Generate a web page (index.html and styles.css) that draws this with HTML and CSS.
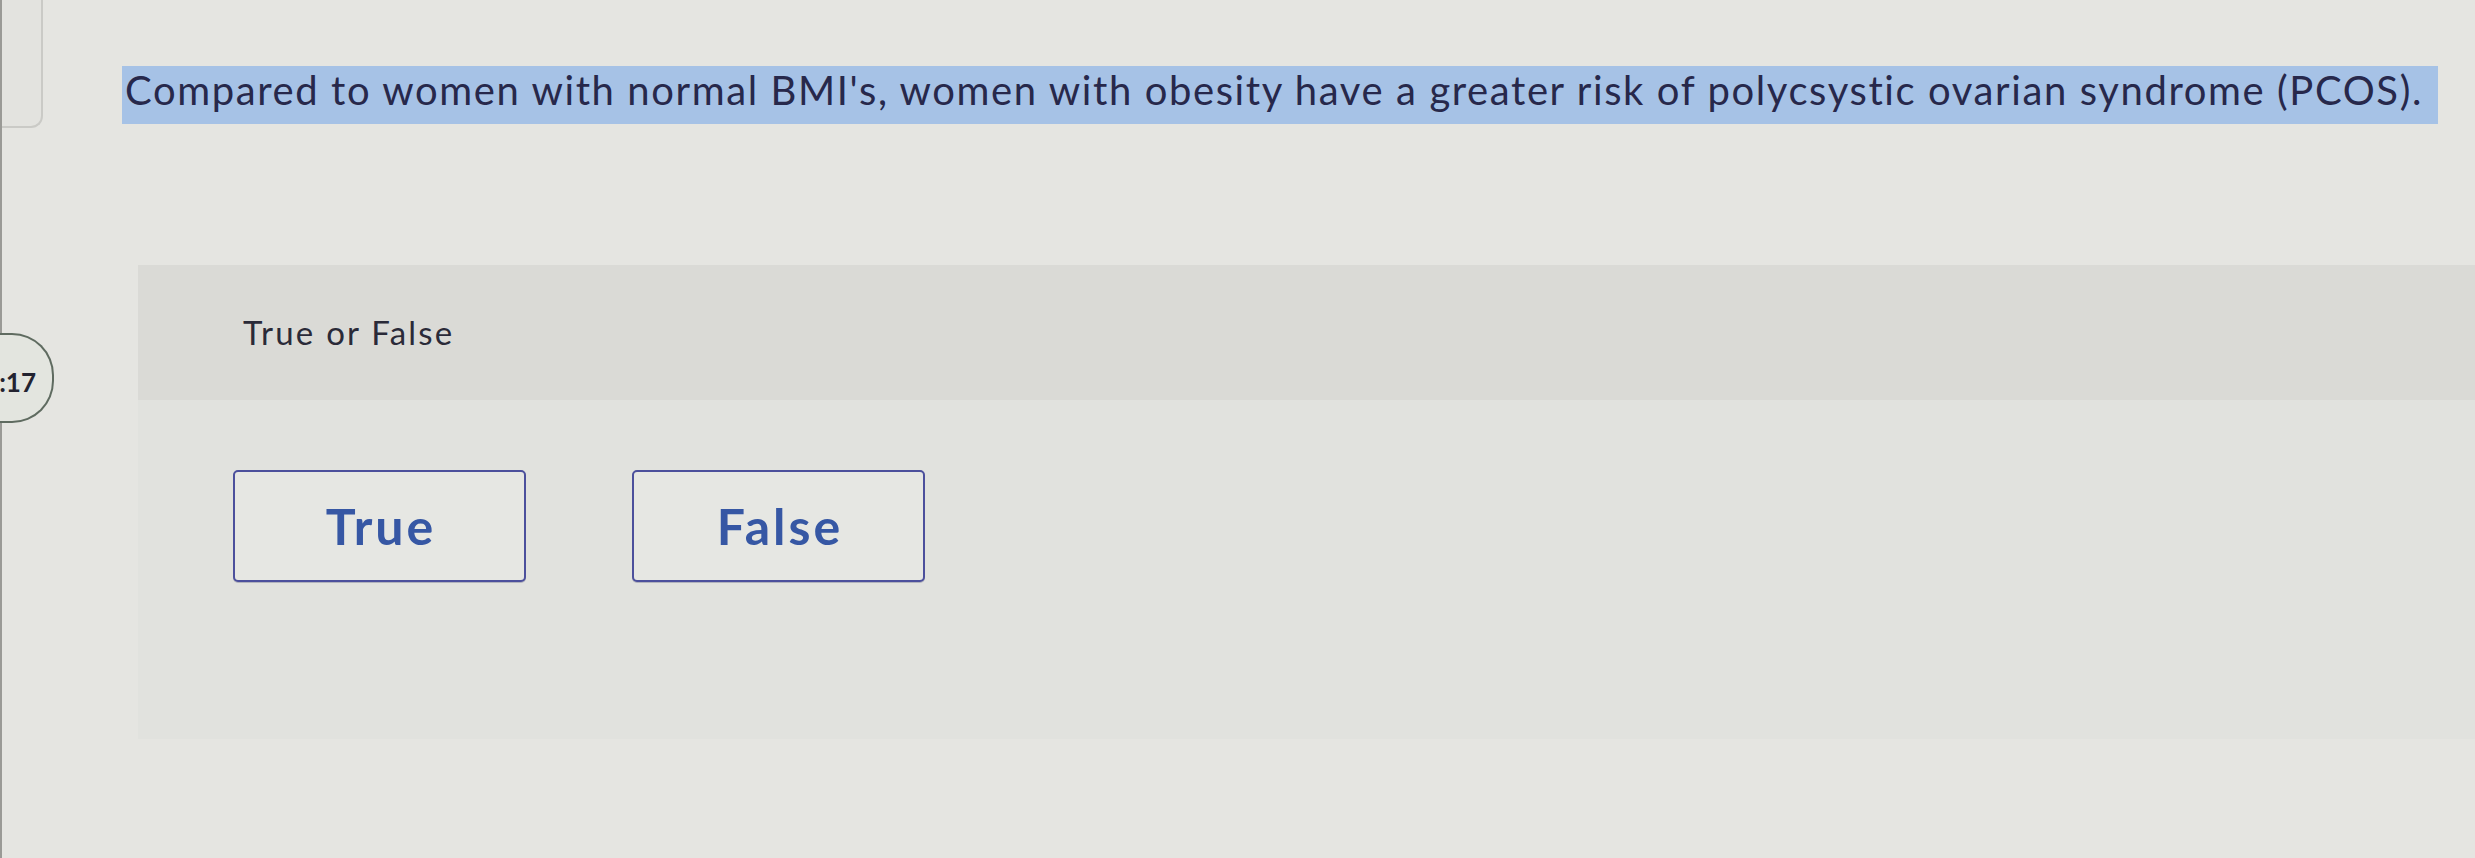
FILE: index.html
```html
<!DOCTYPE html>
<html lang="en">
<head>
<meta charset="utf-8">
<title>True or False</title>
<link rel="stylesheet" href="styles.css">
</head>
<body>
<div class="page">
  <div class="top">
    <div class="tab"></div>
    <div class="prompt">Compared to women with normal BMI's, women with obesity have a greater risk of polycsystic ovarian syndrome (PCOS).</div>
  </div>
  <div class="main">
    <div class="gutter">
      <div class="timer">:17</div>
    </div>
    <section class="panel">
      <div class="panel-head">True or False</div>
      <div class="panel-body">
        <button class="choice" type="button">True</button>
        <button class="choice" type="button">False</button>
      </div>
    </section>
  </div>
</div>
</body>
</html>
```

FILE: styles.css
```css
html, body {
  margin: 0;
  padding: 0;
}

body {
  width: 2475px;
  height: 858px;
  overflow: hidden;
  background: #e5e5e1;
  font-family: Lato, "Open Sans", sans-serif;
}

.page {
  height: 858px;
  border-left: 2px solid #9a9a96;
  box-sizing: border-box;
}

.top {
  display: flex;
  align-items: flex-start;
}

.tab {
  flex: none;
  width: 39px;
  height: 126px;
  border-right: 2px solid #cacac6;
  border-bottom: 2px solid #cacac6;
  border-bottom-right-radius: 12px;
  background: #e3e3df;
}

.prompt {
  flex: none;
  margin-left: 79px;
  margin-top: 66px;
  width: 2316px;
  height: 58px;
  box-sizing: border-box;
  padding-left: 3px;
  background: #a6c2e6;
  color: #27284b;
  font-size: 40px;
  line-height: 48px;
  letter-spacing: 1.6px;
  white-space: nowrap;
}

.main {
  display: flex;
  margin-top: 137px;
}

.gutter {
  flex: none;
  width: 136px;
}

.timer {
  margin-top: 68px;
  margin-left: -2px;
  width: 54px;
  height: 90px;
  box-sizing: border-box;
  border: 2px solid #5f6b60;
  border-left: none;
  border-radius: 0 42px 42px 0;
  background: #e3e5df;
  display: flex;
  align-items: center;
  justify-content: flex-end;
  padding: 8px 16px 0 0;
  font-size: 26px;
  font-weight: 700;
  color: #232330;
}

.panel {
  flex: 1;
  height: 474px;
}

.panel-head {
  height: 135px;
  box-sizing: border-box;
  padding: 48px 0 0 105px;
  background: #dadad6;
  color: #2a2a38;
  font-size: 33px;
  line-height: 38px;
  letter-spacing: 2.2px;
}

.panel-body {
  height: 339px;
  box-sizing: border-box;
  padding: 70px 0 0 95px;
  background: #e1e2de;
  display: flex;
  align-items: flex-start;
  gap: 106px;
}

.choice {
  flex: none;
  width: 293px;
  height: 112px;
  margin: 0;
  padding: 0 0 0 3px;
  border: 2px solid #4c509c;
  border-radius: 5px;
  background: #e6e7e3;
  box-shadow: 0 1px 0 rgba(40, 40, 90, 0.25);
  font-family: Lato, "Open Sans", sans-serif;
  font-size: 50px;
  font-weight: 700;
  letter-spacing: 3px;
  color: #3657a4;
  cursor: pointer;
}
```
